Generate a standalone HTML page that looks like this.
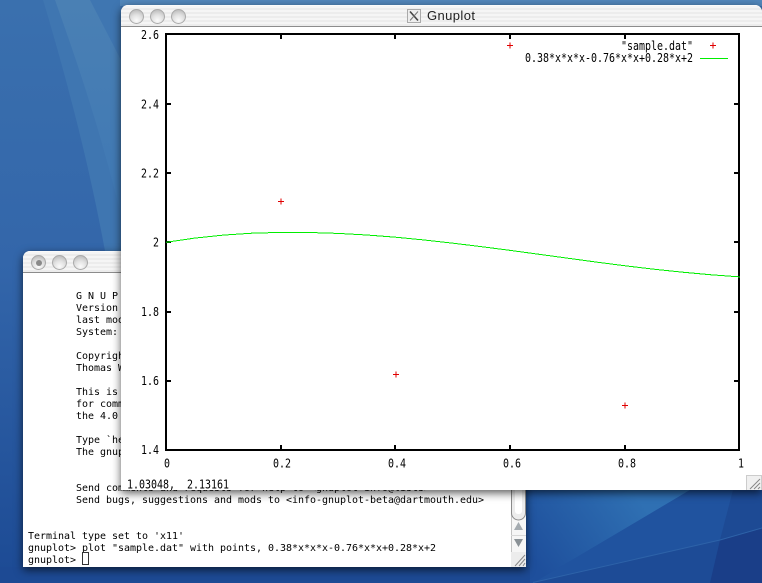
<!DOCTYPE html>
<html><head><meta charset="utf-8"><title>Gnuplot</title>
<style>
html,body{margin:0;padding:0;width:762px;height:583px;overflow:hidden;background:#2a5ea6}
#bg{position:absolute;left:0;top:0}
.win{position:absolute;background:#fff;border-radius:7px 7px 0 0;box-shadow:0 3px 9px rgba(0,0,0,.65);overflow:hidden}
.tb{position:absolute;left:0;top:0;right:0;height:20px;background:repeating-linear-gradient(to bottom,#f5f5f5 0,#f5f5f5 2px,#ececec 2px,#ececec 4px);border-top:1px solid #fafafa;border-bottom:1px solid #8c8c8c}
.b{position:absolute;width:15px;height:15px;border-radius:50%;box-sizing:border-box;border:1px solid #aaa;background:radial-gradient(circle at 50% 80%,#fbfbfb 0,#e2e2e2 45%,#b0b0b0 100%)}
.b i{position:absolute;left:3.500px;top:3.500px;width:6px;height:6px;border-radius:50%;background:#8a8a8a}
pre{position:absolute;margin:0;left:28px;top:40px;font:10px/12px "DejaVu Sans Mono",monospace;letter-spacing:-.02px;color:#000}
#title{position:absolute;left:306px;top:3px;font:13px/16px "Liberation Sans",sans-serif;color:#222;letter-spacing:.4px}
#xi{position:absolute;left:286px;top:4px;width:14px;height:14px}
#plot{position:absolute;left:0;top:0}
text{font-family:"DejaVu Sans Mono",monospace;font-size:12px;fill:#000}
</style></head><body>
<svg id="bg" width="762" height="583" viewBox="0 0 762 583">
<defs>
<linearGradient id="g1" x1="0" y1="0" x2="0" y2="1"><stop offset="0" stop-color="#3a70ae"/><stop offset=".45" stop-color="#3366aa"/><stop offset="1" stop-color="#1c4a94"/></linearGradient>
<linearGradient id="g2" x1="0" y1="0" x2="0" y2="1"><stop offset="0" stop-color="#4a80b4"/><stop offset="1" stop-color="#3f78b4"/></linearGradient>
<linearGradient id="g3" gradientUnits="userSpaceOnUse" x1="540" y1="570" x2="640" y2="500"><stop offset="0" stop-color="#1e4f9c"/><stop offset="1" stop-color="#2f70b3"/></linearGradient>
</defs>
<rect width="762" height="583" fill="url(#g1)"/>
<path d="M43,0C70,90 90,170 105,251L121,251L121,0Z" fill="#3f76b1"/>
<path d="M55,0C80,70 100,130 121,215L121,60L90,0Z" fill="url(#g2)"/>
<rect x="120" y="0" width="642" height="6" fill="#5287bb"/>
<path d="M526,490H690L535,583H526Z" fill="url(#g3)"/>
<path d="M690,490H733L720,540L533,583Z" fill="#20539f"/>
<path d="M733,490H762V528L720,540Z" fill="#1d4a94"/>
<path d="M720,540L533,583H710Z" fill="#1d4b96"/>
<path d="M720,540L762,528V583H710Z" fill="#1a3e88"/>
<path d="M533,582.500L720,540L762,528" stroke="#2d62a8" fill="none"/>
<rect x="0" y="567" width="530" height="16" fill="#1d4a94"/>
</svg>

<div class="win" style="left:23px;top:251px;width:503px;height:316px">
<div class="tb"></div>
<div class="b" style="left:8px;top:4px"><i></i></div>
<div class="b" style="left:29px;top:4px"></div>
<div class="b" style="left:50px;top:4px"></div>
<pre style="left:5px">        G N U P L O T
        Version 4.0 patchlevel 0
        last modified Thu Apr 15 14:44:22 CEST 2004
        System: Darwin 7.4.0

        Copyright (C) 1986 - 1993, 1998, 2004
        Thomas Williams, Colin Kelley and many others

        This is gnuplot version 4.0.  Please refer to the documentation
        for command syntax changes.  The old syntax will be accepted
        the 4.0 series, but not in later releases.

        Type `help` to access the on-line reference manual.
        The gnuplot FAQ is available online.


        Send comments and requests for help to &lt;gnuplot-info@lists&gt;
        Send bugs, suggestions and mods to &lt;info-gnuplot-beta@dartmouth.edu&gt;


Terminal type set to 'x11'
gnuplot&gt; plot "sample.dat" with points, 0.38*x*x*x-0.76*x*x+0.28*x+2
gnuplot&gt; </pre>
<div style="position:absolute;left:59px;top:301px;width:5px;height:11px;border:1px solid #333"></div>
<svg style="position:absolute;left:488px;top:0" width="15" height="316" viewBox="0 0 15 316">
<rect x="0" y="22" width="15" height="294" fill="#f6f6f6"/>
<rect x="0" y="22" width="1" height="279" fill="#c4c4c4"/>
<rect x="0.5" y="200" width="14" height="69" rx="7" fill="#ececec" stroke="#8a8a8a"/>
<rect x="4" y="205" width="7" height="58" rx="3" fill="#fff"/>
<rect x="0" y="284" width="15" height="1" fill="#d8d8d8"/>
<path d="M7.500,271L12,279H3Z" fill="#a4abb0"/>
<path d="M7.500,296L12,288H3Z" fill="#8a9196"/>
<rect x="0" y="301" width="15" height="15" fill="#ececec"/>
<path d="M4,315L14,304M8,315L14,308M12,315L14,312" stroke="#888" fill="none"/>
</svg>
</div>

<div class="win" style="left:121px;top:5px;width:641px;height:485px">
<div class="tb"></div>
<div class="b" style="left:8px;top:4px"></div>
<div class="b" style="left:29px;top:4px"></div>
<div class="b" style="left:50px;top:4px"></div>
<svg id="xi" viewBox="0 0 14 14"><rect x=".5" y=".5" width="13" height="13" fill="#eee" stroke="#aaa"/><path d="M3,2.500L11,11.500" stroke="#444" stroke-width="1.600"/><path d="M11,2.500L3,11.500" stroke="#777"/></svg>
<div id="title">Gnuplot</div>
<svg style="position:absolute;left:625px;top:470px" width="16" height="15" viewBox="0 0 16 15"><rect width="16" height="15" fill="#f0f0f0"/><rect x=".5" y=".5" width="15" height="15" fill="none" stroke="#ccc"/><path d="M4,14L14,4M8,14L14,8M12,14L14,12" stroke="#888" fill="none"/></svg>
</div>

<svg id="plot" width="762" height="583" viewBox="0 0 762 583" style="pointer-events:none">
<g shape-rendering="crispEdges" fill="#000">
<rect x="165" y="33" width="575" height="2"/>
<rect x="165" y="449" width="575" height="2"/>
<rect x="165" y="33" width="2" height="418"/>
<rect x="738" y="33" width="2" height="418"/>
<rect x="280" y="33" width="2" height="6"/><rect x="394" y="33" width="2" height="6"/><rect x="509" y="33" width="2" height="6"/><rect x="624" y="33" width="2" height="6"/>
<rect x="280" y="445" width="2" height="6"/><rect x="394" y="445" width="2" height="6"/><rect x="509" y="445" width="2" height="6"/><rect x="624" y="445" width="2" height="6"/>
<rect x="165" y="103" width="6" height="2"/><rect x="165" y="172" width="6" height="2"/><rect x="165" y="241" width="6" height="2"/><rect x="165" y="311" width="6" height="2"/><rect x="165" y="380" width="6" height="2"/>
<rect x="734" y="103" width="6" height="2"/><rect x="734" y="172" width="6" height="2"/><rect x="734" y="241" width="6" height="2"/><rect x="734" y="311" width="6" height="2"/><rect x="734" y="380" width="6" height="2"/>
</g>
<polyline shape-rendering="crispEdges" fill="none" stroke="#00ee00" stroke-width="1" points="166,242.300 194.700,238.100 223.400,235.100 252.100,233.200 280.800,232.400 309.500,232.500 338.200,233.400 366.900,235 395.600,237.200 424.300,240 453,243.200 481.700,246.700 510.400,250.400 539.100,254.300 567.800,258.200 596.500,262.100 625.200,265.800 653.900,269.200 682.600,272.200 711.300,274.800 740,276.900"/>
<path shape-rendering="crispEdges" d="M700,58.500H728" stroke="#00ee00" fill="none"/>
<g shape-rendering="crispEdges" stroke="#e00000" fill="none">
<path d="M278,201.500h6M281,198.500v6"/>
<path d="M393,374.500h6M396,371.500v6"/>
<path d="M507,45.500h6M510,42.500v6"/>
<path d="M622,405.500h6M625,402.500v6"/>
<path d="M710,45.500h6M713,42.500v6"/>
</g>
<g>
<text x="141" y="39" textLength="18" lengthAdjust="spacingAndGlyphs">2.6</text>
<text x="141" y="108.500" textLength="18" lengthAdjust="spacingAndGlyphs">2.4</text>
<text x="141" y="177.500" textLength="18" lengthAdjust="spacingAndGlyphs">2.2</text>
<text x="153" y="246.500" textLength="6" lengthAdjust="spacingAndGlyphs">2</text>
<text x="141" y="316" textLength="18" lengthAdjust="spacingAndGlyphs">1.8</text>
<text x="141" y="385" textLength="18" lengthAdjust="spacingAndGlyphs">1.6</text>
<text x="141" y="454" textLength="18" lengthAdjust="spacingAndGlyphs">1.4</text>
<text x="164" y="467.500" textLength="6" lengthAdjust="spacingAndGlyphs">0</text>
<text x="273" y="467.500" textLength="18" lengthAdjust="spacingAndGlyphs">0.2</text>
<text x="388" y="467.500" textLength="18" lengthAdjust="spacingAndGlyphs">0.4</text>
<text x="503" y="467.500" textLength="18" lengthAdjust="spacingAndGlyphs">0.6</text>
<text x="618" y="467.500" textLength="18" lengthAdjust="spacingAndGlyphs">0.8</text>
<text x="738" y="467.500" textLength="6" lengthAdjust="spacingAndGlyphs">1</text>
<text x="621" y="50" textLength="72" lengthAdjust="spacingAndGlyphs">"sample.dat"</text>
<text x="525" y="62" textLength="168" lengthAdjust="spacingAndGlyphs">0.38*x*x*x-0.76*x*x+0.28*x+2</text>
<text x="127" y="488.500" textLength="102" lengthAdjust="spacingAndGlyphs" xml:space="preserve">1.03048,  2.13161</text>
</g>
</svg>
</body></html>
